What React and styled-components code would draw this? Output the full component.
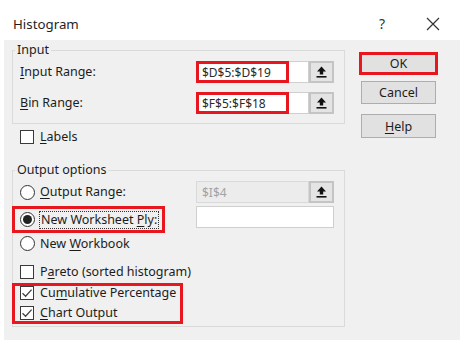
import React from 'react';
import styled, { createGlobalStyle } from 'styled-components';

const Global = createGlobalStyle`
  html, body { margin: 0; padding: 0; background: #fff; }
  body { font-family: "Noto Sans", "Open Sans", sans-serif; color: #1c1c1c; }
  * { box-sizing: border-box; }
`;

const RED = '#e8161e';

const Window = styled.div`
  width: 474px;
  height: 343px;
  display: flex;
  flex-direction: column;
  background: #fff;
  overflow: hidden;
`;

const TitleBar = styled.div`
  height: 40px;
  display: flex;
  align-items: center;
  padding-left: 13px;
  padding-top: 7px;
`;

const Title = styled.div`
  flex: 1;
  font-size: 13.3px;
  color: #1f1f1f;
`;

const TitleButton = styled.div`
  width: ${p => p.$w}px;
  display: flex;
  justify-content: center;
  align-items: center;
  font-size: 14px;
  color: #333;
`;

const Panel = styled.div`
  margin-left: 4px;
  width: 456px;
  height: 300px;
  background: #f0f0f0;
  display: flex;
  padding: 0 0 0 8px;
`;

const LeftCol = styled.div`
  width: 333px;
  display: flex;
  flex-direction: column;
`;

const RightCol = styled.div`
  margin-left: 14px;
  padding-top: 12px;
  width: 79px;
  display: flex;
  flex-direction: column;
  align-items: center;
`;

const Group = styled.fieldset`
  margin: ${p => p.$mt}px 0 0 0;
  padding: ${p => p.$pt}px 10px ${p => p.$pb}px 7px;
  border: 1px solid #dadada;
  min-width: 0;
  height: ${p => p.$h}px;
`;

const Legend = styled.legend`
  padding: 0 2px;
  margin-left: -5px;
  font-size: 12.5px;
  line-height: 16px;
  color: #1c1c1c;
`;

const Row = styled.div`
  display: flex;
  align-items: ${p => p.$align || 'center'};
  justify-content: space-between;
  margin-top: ${p => p.$mt || 0}px;
  height: ${p => (p.$h ? `${p.$h}px` : 'auto')};
`;

const Label = styled.span`
  font-size: 12.5px;
  line-height: 16px;
  color: #1c1c1c;
  white-space: nowrap;
  u { text-decoration: underline; text-underline-offset: 2px; }
`;

const FocusLabel = styled(Label)`
  outline: 1px dotted #333;
  outline-offset: 0px;
  padding: 0 1px;
`;

const Field = styled.div`
  width: 138px;
  height: 22px;
  display: flex;
`;

const Box = styled.div`
  flex: 1;
  position: relative;
  background: ${p => (p.$disabled ? '#ececec' : '#fff')};
  border: 1px solid ${p => (p.$disabled ? '#d9d9d9' : '#cfcfcf')};
  display: flex;
  align-items: center;
`;

const Value = styled.span`
  font-size: 12px;
  color: ${p => (p.$disabled ? '#a3a3a3' : '#2a2a2a')};
  padding-left: 5px;
`;

const RedValue = styled.div`
  position: absolute;
  left: -1px;
  top: -1px;
  width: 93px;
  height: 22px;
  border: 3px solid ${RED};
  display: flex;
  align-items: center;
  font-size: 12px;
  color: #2a2a2a;
  padding-left: 3px;
`;

const PickButton = styled.div`
  width: 25px;
  height: 22px;
  background: #e4e4e4;
  border: 2px solid #c4c4c4;
  display: flex;
  align-items: center;
  justify-content: center;
`;

const Check = styled.span`
  width: 14px;
  height: 14px;
  border: 1px solid #3a3a3a;
  background: #fff;
  display: inline-flex;
  align-items: center;
  justify-content: center;
  margin-right: 6px;
  flex-shrink: 0;
`;

const Radio = styled.span`
  width: 15px;
  height: 15px;
  border-radius: 50%;
  border: 1px solid #333;
  background: #fff;
  display: inline-flex;
  align-items: center;
  justify-content: center;
  margin-right: 5px;
  flex-shrink: 0;
  &::after {
    content: '';
    display: ${p => (p.$on ? 'block' : 'none')};
    width: 9px;
    height: 9px;
    border-radius: 50%;
    background: #222;
  }
`;

const Option = styled.div`
  display: flex;
  align-items: center;
  height: ${p => p.$h || 20}px;
  margin-top: ${p => p.$mt || 0}px;
  padding-left: ${p => p.$pl || 0}px;
`;

const Highlight = styled.div`
  border: 3px solid ${RED};
  width: ${p => p.$w}px;
  margin-left: -8px;
  margin-top: ${p => p.$mt || 0}px;
  padding: ${p => p.$pad};
  display: flex;
  flex-direction: column;
  gap: ${p => p.$gap || 0}px;
`;

const Button = styled.div`
  width: 75px;
  height: ${p => p.$h || 23}px;
  background: #e1e1e1;
  border: 1px solid #adadad;
  display: flex;
  align-items: center;
  justify-content: center;
  font-size: 12.5px;
  color: #1c1c1c;
  margin-top: ${p => p.$mt || 0}px;
  u { text-decoration: underline; text-underline-offset: 2px; }
`;

const RedFrame = styled.div`
  width: 79px;
  height: 23px;
  border: 3px solid ${RED};
  background: #e1e1e1;
  display: flex;
  align-items: center;
  justify-content: center;
  font-size: 12.5px;
  color: #1c1c1c;
`;

const UpArrow = () => (
  <svg width="11" height="12" viewBox="0 0 11 12">
    <path d="M5.5 0.5 L1 5.5 H3.8 V8.5 H7.2 V5.5 H10 Z" fill="#111" />
    <rect x="0.5" y="10" width="10" height="1.6" fill="#111" />
  </svg>
);

const Tick = () => (
  <svg width="12" height="12" viewBox="0 0 12 12">
    <path d="M1.5 6.2 L4.6 9.2 L10.6 2.6" fill="none" stroke="#444" strokeWidth="1.3" />
  </svg>
);

const CloseIcon = () => (
  <svg width="14" height="14" viewBox="0 0 14 14">
    <path d="M1 1 L13 13 M13 1 L1 13" stroke="#333" strokeWidth="1.2" />
  </svg>
);

const RangeField = ({ value, highlighted, disabled, noButton }) => (
  <Field>
    <Box $disabled={disabled}>
      {highlighted ? <RedValue>{value}</RedValue> : <Value $disabled={disabled}>{value}</Value>}
    </Box>
    {!noButton && (
      <PickButton>
        <UpArrow />
      </PickButton>
    )}
  </Field>
);

export default function App() {
  return (
    <>
      <Global />
      <Window>
        <TitleBar>
          <Title>Histogram</Title>
          <TitleButton $w={20}>?</TitleButton>
          <TitleButton $w={31} />
          <TitleButton $w={20}><CloseIcon /></TitleButton>
          <TitleButton $w={31} />
        </TitleBar>
        <Panel>
          <LeftCol>
            <Group $mt={2} $pt={3} $pb={6} $h={82}>
              <Legend>Input</Legend>
              <Row $h={22}>
                <Label><u>I</u>nput Range:</Label>
                <RangeField value="$D$5:$D$19" highlighted />
              </Row>
              <Row $h={22} $mt={9}>
                <Label><u>B</u>in Range:</Label>
                <RangeField value="$F$5:$F$18" highlighted />
              </Row>
            </Group>
            <Option $h={20} $mt={3} $pl={8}>
              <Check />
              <Label><u>L</u>abels</Label>
            </Option>
            <Group $mt={15} $pt={3} $pb={4} $h={165}>
              <Legend>Output options</Legend>
              <Row $h={22}>
                <Option>
                  <Radio />
                  <Label><u>O</u>utput Range:</Label>
                </Option>
                <RangeField value="$I$4" disabled />
              </Row>
              <Row $align="flex-start" $mt={3}>
                <Highlight $w={153} $pad="0 0 0 5px">
                  <Option $h={21}>
                    <Radio $on />
                    <FocusLabel>New Worksheet <u>P</u>ly:</FocusLabel>
                  </Option>
                </Highlight>
                <RangeField noButton />
              </Row>
              <Option $h={21}>
                <Radio />
                <Label>New <u>W</u>orkbook</Label>
              </Option>
              <Option $h={20} $mt={8}>
                <Check />
                <Label>P<u>a</u>reto (sorted histogram)</Label>
              </Option>
              <Highlight $w={171} $pad="0 0 1px 5px" $gap={6} $mt={1}>
                <Option $h={14}>
                  <Check><Tick /></Check>
                  <Label>Cu<u>m</u>ulative Percentage</Label>
                </Option>
                <Option $h={14}>
                  <Check><Tick /></Check>
                  <Label><u>C</u>hart Output</Label>
                </Option>
              </Highlight>
            </Group>
          </LeftCol>
          <RightCol>
            <RedFrame>OK</RedFrame>
            <Button $mt={6}>Cancel</Button>
            <Button $mt={10} $h={24}><u>H</u>elp</Button>
          </RightCol>
        </Panel>
      </Window>
    </>
  );
}
